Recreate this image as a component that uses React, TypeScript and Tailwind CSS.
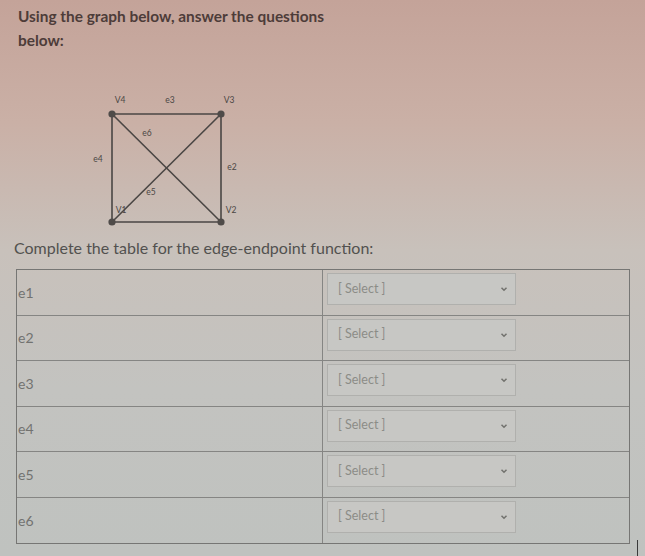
import React from 'react';

const edges = ['e1', 'e2', 'e3', 'e4', 'e5', 'e6'];

const Graph = () => (
  <svg width="300" height="184" viewBox="0 0 300 184" className="block">
    <g stroke="#4a4644" strokeWidth="1.6" fill="none">
      <line x1="112" y1="62" x2="221" y2="62" />
      <line x1="221" y1="62" x2="221" y2="170" />
      <line x1="221" y1="170" x2="112" y2="170" />
      <line x1="112" y1="170" x2="112" y2="62" />
      <line x1="112" y1="62" x2="221" y2="170" />
      <line x1="221" y1="62" x2="112" y2="170" />
    </g>
    <g fill="#4f4b49">
      <circle cx="112" cy="62" r="3.6" />
      <circle cx="221" cy="62" r="3.6" />
      <circle cx="112" cy="170" r="3.6" />
      <circle cx="221" cy="170" r="3.6" />
    </g>
    <g fill="#4b4745" fontSize="8.5" fontFamily="Lato, 'Liberation Sans', sans-serif" textAnchor="middle" dominantBaseline="middle">
      <text x="120" y="49">V4</text>
      <text x="170" y="49">e3</text>
      <text x="229" y="49">V3</text>
      <text x="147" y="82">e6</text>
      <text x="98" y="108">e4</text>
      <text x="232" y="116">e2</text>
      <text x="151" y="141">e5</text>
      <text x="121" y="159">V1</text>
      <text x="231" y="159">V2</text>
    </g>
  </svg>
);

const SelectBox = () => (
  <div className="flex h-[32px] w-[189px] items-center justify-between border border-[#b0b0ad] bg-[#c7c7c4] pl-[10px] pr-[6px]">
    <span className="text-[12.5px] text-[#8c8c87]">[ Select ]</span>
    <svg width="10" height="10" viewBox="0 0 10 10">
      <path d="M2.5 3.8 L5 6.3 L7.5 3.8" stroke="#72726e" strokeWidth="1.5" fill="none" />
    </svg>
  </div>
);

export default function App() {
  return (
    <div
      className="relative h-[556px] w-[645px] overflow-hidden bg-[linear-gradient(180deg,#c4a399_0%,#cab0a6_22%,#c8c1bb_45%,#c3c3c0_70%,#bfc2bf_100%)]"
      style={{ fontFamily: "Lato, 'Liberation Sans', sans-serif" }}
    >
      <p className="pl-[18px] pt-[4px] text-[15.4px] font-bold leading-[24px] text-[#4d3c39]">
        Using the graph below, answer the questions
        <br />
        below:
      </p>
      <Graph />
      <p className="pl-[14px] text-[16px] leading-[24px] text-[#52514f]">
        Complete the table for the edge-endpoint function:
      </p>
      <div className="ml-[16px] mt-[9px] w-[614px] border border-[#767674]">
        {edges.map((e, i) => (
          <div
            key={e}
            className={`flex h-[45.5px] ${i < edges.length - 1 ? 'border-b border-[#858583]' : ''}`}
          >
            <div className="flex w-[306px] items-center border-r border-[#858583] pl-[1px] text-[14px] text-[#727270]">
              {e}
            </div>
            <div className="flex flex-1 items-start pl-[4px] pt-[3px]">
              <SelectBox />
            </div>
          </div>
        ))}
      </div>
      <div className="absolute left-[637px] top-[540px] h-[16px] w-[1px] bg-[#3a3a3a]" />
    </div>
  );
}
